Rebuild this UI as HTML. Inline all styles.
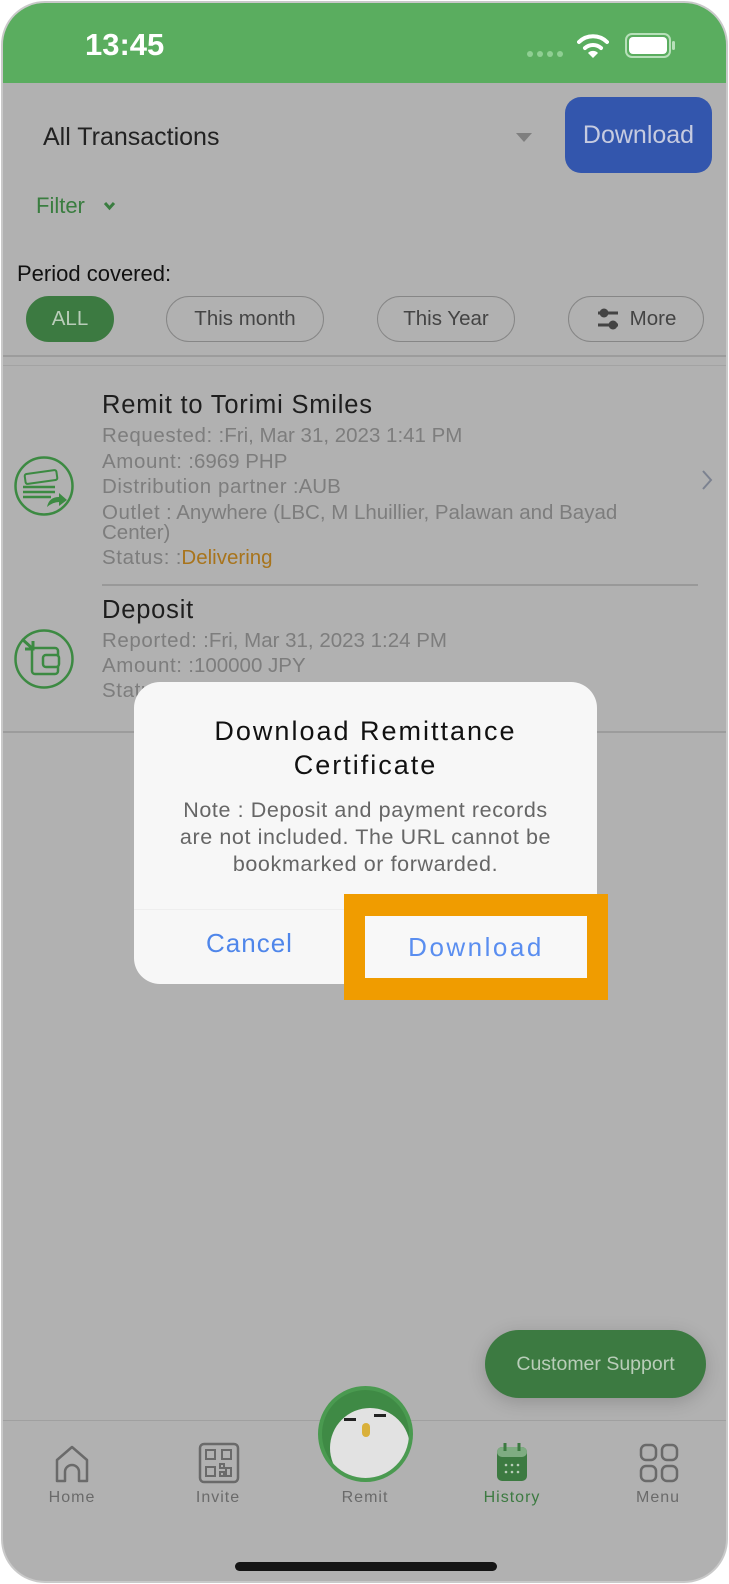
<!DOCTYPE html>
<html><head><meta charset="utf-8"><style>
*{margin:0;padding:0;box-sizing:border-box}
body{width:729px;height:1584px;background:#fff;font-family:"Liberation Sans",sans-serif;position:relative;overflow:hidden}
.frame{position:absolute;left:1px;top:1px;width:727px;height:1582px;border-radius:44px;background:#b1b1b1;border:2px solid #c9c9c9;overflow:hidden}
.a{position:absolute;white-space:nowrap}
.sb{position:absolute;left:0;top:0;width:100%;height:80px;background:#5aad5f}
.chip{position:absolute;top:293px;height:46px;border:1.5px solid #868686;border-radius:23px;font-size:20.5px;color:#444;display:flex;align-items:center;justify-content:center}
.det{font-size:20.5px;color:#7d7d7d;left:99px}
.det b{font-weight:normal;letter-spacing:.6px}
.nl{font-size:16px;color:#6a6a6a;letter-spacing:1px;top:1486px;transform:translateX(-50%)}
</style></head><body>
<div class="frame">
<div class="sb"></div>
<div class="a" style="left:82px;top:24px;font-size:31px;color:#fff;font-weight:bold">13:45</div>
<div class="a" style="left:524px;top:48px;display:flex;gap:4px"><i style="width:6px;height:6px;border-radius:3px;background:#8fcf93;display:block"></i><i style="width:6px;height:6px;border-radius:3px;background:#8fcf93;display:block"></i><i style="width:6px;height:6px;border-radius:3px;background:#8fcf93;display:block"></i><i style="width:6px;height:6px;border-radius:3px;background:#8fcf93;display:block"></i></div>
<svg class="a" style="left:574px;top:30px" width="32" height="26" viewBox="0 0 32 26"><path d="M2 9 A20 20 0 0 1 30 9" stroke="#fff" stroke-width="4" fill="none" stroke-linecap="round"/><path d="M8 15 A12 12 0 0 1 24 15" stroke="#fff" stroke-width="4" fill="none" stroke-linecap="round"/><path d="M16 25 L11 20 A7 7 0 0 1 21 20 Z" fill="#fff"/></svg>
<div class="a" style="left:622px;top:30px;width:46px;height:25px;border:2px solid #b8e0ba;border-radius:7px;padding:2px"><div style="width:100%;height:100%;background:#fff;border-radius:4px"></div></div>
<div class="a" style="left:669px;top:38px;width:3px;height:9px;background:#b8e0ba;border-radius:2px"></div>

<div class="a" style="left:40px;top:120px;font-size:25px;color:#222">All Transactions</div>
<div class="a" style="left:513px;top:130px;width:0;height:0;border-left:8px solid transparent;border-right:8px solid transparent;border-top:9px solid #7f7f7f"></div>
<div class="a" style="left:562px;top:94px;width:147px;height:76px;background:#3356ad;border-radius:16px;color:#c6cbe0;font-size:25px;display:flex;align-items:center;justify-content:center">Download</div>

<div class="a" style="left:33px;top:190px;font-size:22px;color:#3a7d40">Filter</div>
<svg class="a" style="left:100px;top:198px" width="13" height="10" viewBox="0 0 13 10"><path d="M2 2 L6.5 7 L11 2" stroke="#3a7d40" stroke-width="3" fill="none"/></svg>
<div class="a" style="left:14px;top:258px;font-size:22px;color:#111">Period covered:</div>
<div class="chip" style="left:23px;width:88px;background:#3c7a41;border-color:#3c7a41;color:#b9cdb9">ALL</div>
<div class="chip" style="left:163px;width:158px">This month</div>
<div class="chip" style="left:374px;width:138px">This Year</div>
<div class="chip" style="left:565px;width:136px"><svg width="26" height="24" viewBox="0 0 26 24" style="margin-right:8px"><path d="M2 6 H22 M2 18 H22" stroke="#444" stroke-width="3"/><circle cx="8" cy="6" r="4.5" fill="#444"/><circle cx="17" cy="18" r="4.5" fill="#444"/></svg>More</div>
<div class="a" style="left:0;top:352px;width:100%;height:2px;background:#9c9c9c"></div>
<div class="a" style="left:0;top:362px;width:100%;height:1px;background:#a3a3a3"></div>

<svg class="a" style="left:10px;top:452px" width="62" height="62" viewBox="0 0 62 62"><circle cx="31" cy="31" r="28.5" stroke="#3c8a42" stroke-width="2.5" fill="none"/><rect x="12" y="17" width="32" height="10" rx="2" stroke="#3c8a42" stroke-width="2" fill="none" transform="rotate(-8 28 22)"/><path d="M10 32 H42 M10 37 H42 M10 42 H38" stroke="#3c8a42" stroke-width="2.5"/><path d="M34 52 Q36 42 46 42 L46 38 L54 45 L46 51 L46 47 Q40 47 34 52Z" fill="#3c8a42"/></svg>
<div class="a" style="left:99px;top:388px;font-size:25.5px;color:#1e1e1e;letter-spacing:.8px">Remit to Torimi Smiles</div>
<div class="a det" style="top:421px"><b>Requested:</b> :Fri, Mar 31, 2023 1:41 PM</div>
<div class="a det" style="top:447px"><b>Amount:</b> :6969 PHP</div>
<div class="a det" style="top:472px"><b>Distribution partner</b> :AUB</div>
<div class="a det" style="top:498px"><b>Outlet</b> : Anywhere (LBC, M Lhuillier, Palawan and Bayad</div>
<div class="a det" style="top:518px">Center)</div>
<div class="a det" style="top:543px"><b>Status:</b> :<span style="color:#a8741c">Delivering</span></div>
<svg class="a" style="left:697px;top:465px" width="14" height="24" viewBox="0 0 14 24"><path d="M3 3 L11 12 L3 21" stroke="#7c8290" stroke-width="2" fill="none"/></svg>
<div class="a" style="left:99px;top:581px;width:596px;height:1.5px;background:#999"></div>

<svg class="a" style="left:10px;top:625px" width="62" height="62" viewBox="0 0 62 62"><circle cx="31" cy="31" r="28.5" stroke="#3c8a42" stroke-width="2.5" fill="none"/><rect x="19" y="20" width="26" height="26" rx="3" stroke="#3c8a42" stroke-width="2.5" fill="none"/><rect x="30" y="27" width="16" height="12" rx="3" stroke="#3c8a42" stroke-width="2.5" fill="#b1b1b1"/><path d="M9 11 L20 21 M20 13 V21 H12" stroke="#3c8a42" stroke-width="3" fill="none"/></svg>
<div class="a" style="left:99px;top:593px;font-size:25.5px;color:#1e1e1e;letter-spacing:.8px">Deposit</div>
<div class="a det" style="top:626px"><b>Reported:</b> :Fri, Mar 31, 2023 1:24 PM</div>
<div class="a det" style="top:651px"><b>Amount:</b> :100000 JPY</div>
<div class="a det" style="top:676px"><b>Status:</b></div>
<div class="a" style="left:0;top:728px;width:100%;height:1.5px;background:#9c9c9c"></div>

<div class="a" style="left:131px;top:679px;width:463px;height:302px;background:#f7f7f7;border-radius:26px"></div>
<div class="a" style="left:131px;top:906px;width:463px;height:1px;background:#eee"></div>
<div class="a" style="left:131px;top:711px;width:463px;text-align:center;font-size:27px;line-height:34px;color:#111;letter-spacing:2px">Download Remittance<br>Certificate</div>
<div class="a" style="left:131px;top:794px;width:463px;text-align:center;font-size:21.5px;line-height:27px;color:#666;letter-spacing:.6px">Note : Deposit and payment records<br>are not included. The URL cannot be<br>bookmarked or forwarded.</div>
<div class="a" style="left:203px;top:925px;font-size:26px;color:#4f86ea;letter-spacing:1px">Cancel</div>
<div class="a" style="left:341px;top:891px;width:264px;height:106px;background:#f09c00"></div>
<div class="a" style="left:362px;top:913px;width:222px;height:62px;background:#f8f8f8;display:flex;align-items:center;justify-content:center;font-size:26px;color:#5a8ef0;letter-spacing:2.5px">Download</div>

<div class="a" style="left:482px;top:1327px;width:221px;height:68px;background:#3c7a41;border-radius:34px;color:#b9cdb9;font-size:19.5px;display:flex;align-items:center;justify-content:center;box-shadow:0 4px 18px rgba(0,0,0,.18)">Customer Support</div>

<div class="a" style="left:0;top:1417px;width:100%;height:1px;background:#a0a0a0"></div>
<svg class="a" style="left:50px;top:1441px" width="38" height="40" viewBox="0 0 38 40"><path d="M4 37 V16 L19 3 L34 16 V37 H26 V28 A7 7 0 0 0 12 28 V37 Z" stroke="#6a6a6a" stroke-width="2.5" fill="none" stroke-linejoin="round"/></svg>
<svg class="a" style="left:195px;top:1439px" width="42" height="42" viewBox="0 0 42 42"><rect x="2" y="2" width="38" height="38" rx="4" stroke="#6a6a6a" stroke-width="2.5" fill="none"/><path d="M8 8 h9v9h-9z M24 8 h9v9h-9z M8 25 h9v9h-9z M22 22 h4v4h-4z M28 26 h5v8h-5z M22 30h4v4h-4z" stroke="#6a6a6a" stroke-width="2" fill="none"/></svg>
<div class="a" style="left:315px;top:1383px;width:95px;height:96px;border-radius:50%;background:#3f8a45;border:4px solid #4a9a50;overflow:hidden"><div style="position:absolute;left:8px;top:18px;width:80px;height:80px;border-radius:50%;background:#e2e2e2"></div><div style="position:absolute;left:40px;top:33px;width:8px;height:14px;border-radius:4px;background:#d9b03a"></div><div style="position:absolute;left:22px;top:28px;width:12px;height:3px;background:#222"></div><div style="position:absolute;left:52px;top:24px;width:12px;height:3px;background:#222"></div></div>
<svg class="a" style="left:492px;top:1438px" width="34" height="42" viewBox="0 0 34 42"><rect x="2" y="6" width="30" height="34" rx="5" fill="#3c7a41"/><rect x="2" y="6" width="30" height="10" rx="5" fill="#7fac82"/><path d="M10 2 V10 M24 2 V10" stroke="#3c7a41" stroke-width="3"/><g fill="#b9cdb9"><circle cx="11" cy="24" r="1.3"/><circle cx="17" cy="24" r="1.3"/><circle cx="23" cy="24" r="1.3"/><circle cx="11" cy="31" r="1.3"/><circle cx="17" cy="31" r="1.3"/><circle cx="23" cy="31" r="1.3"/></g></svg>
<svg class="a" style="left:636px;top:1440px" width="40" height="40" viewBox="0 0 40 40"><rect x="2" y="2" width="15" height="15" rx="5" stroke="#6a6a6a" stroke-width="2.5" fill="none"/><rect x="23" y="2" width="15" height="15" rx="5" stroke="#6a6a6a" stroke-width="2.5" fill="none"/><rect x="2" y="23" width="15" height="15" rx="5" stroke="#6a6a6a" stroke-width="2.5" fill="none"/><rect x="23" y="23" width="15" height="15" rx="5" stroke="#6a6a6a" stroke-width="2.5" fill="none"/></svg>
<div class="a nl" style="left:69px">Home</div>
<div class="a nl" style="left:215px">Invite</div>
<div class="a nl" style="left:362px">Remit</div>
<div class="a nl" style="left:509px;color:#3c7a41">History</div>
<div class="a nl" style="left:655px">Menu</div>
<div class="a" style="left:232px;top:1559px;width:262px;height:9px;border-radius:5px;background:#151515"></div>
</div>
</body></html>
